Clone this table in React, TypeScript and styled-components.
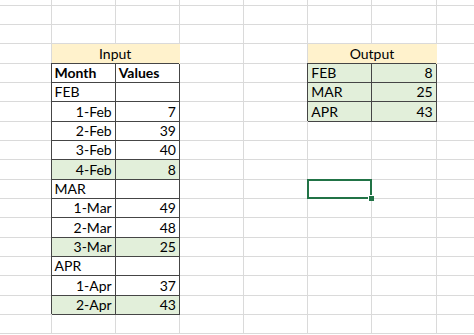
import React from "react";
import styled, { createGlobalStyle, css } from "styled-components";

const GlobalStyle = createGlobalStyle`
  html, body {
    margin: 0;
    padding: 0;
    background: #ffffff;
    overflow: hidden;
  }
`;

const COL_W = 64.2;
const ROW_H = 19.34;

const Viewport = styled.div`
  width: 474px;
  height: 335px;
  overflow: hidden;
`;

const Sheet = styled.div`
  display: grid;
  grid-template-columns: repeat(8, ${COL_W}px);
  grid-auto-rows: ${ROW_H}px;
  margin: -13.5px 0 0 -12.7px;
  font-family: Lato, "Liberation Sans", sans-serif;
  font-size: 14px;
  color: #000;
`;

type Fill = "none" | "gold" | "green";

const fills: Record<Fill, string> = {
  none: "transparent",
  gold: "#fff2cc",
  green: "#e2efda",
};

interface CellProps {
  $fill: Fill;
  $boxed?: boolean;
  $align: "left" | "right" | "center";
  $bold?: boolean;
  $span: number;
  $selected?: boolean;
}

const Cell = styled.div<CellProps>`
  position: relative;
  box-sizing: border-box;
  grid-column: span ${(p) => p.$span};
  display: flex;
  align-items: flex-end;
  justify-content: ${(p) =>
    p.$align === "right" ? "flex-end" : p.$align === "center" ? "center" : "flex-start"};
  padding: 0 3px 1px;
  background: ${(p) => fills[p.$fill]};
  border-right: 1px solid ${(p) => (p.$fill === "none" ? "#dadada" : fills[p.$fill])};
  border-bottom: 1px solid ${(p) => (p.$fill === "none" ? "#dadada" : fills[p.$fill])};
  font-weight: ${(p) => (p.$bold ? 700 : 400)};
  white-space: nowrap;
  line-height: 17px;

  ${(p) =>
    p.$boxed &&
    css`
      border-right-color: #454545;
      border-bottom-color: #454545;
      box-shadow: -1px -1px 0 0 #454545;
    `}

  ${(p) =>
    p.$selected &&
    css`
      &::after {
        content: "";
        position: absolute;
        left: -1px;
        top: -1px;
        right: -1px;
        bottom: -1px;
        border: 2px solid #217346;
      }
      &::before {
        content: "";
        position: absolute;
        right: -3px;
        bottom: -3px;
        width: 5px;
        height: 5px;
        background: #217346;
        border: 1px solid #fff;
        border-width: 1px 0 0 1px;
        z-index: 1;
      }
    `}
`;

type Spec = {
  text?: string;
  fill?: Fill;
  boxed?: boolean;
  align?: "left" | "right" | "center";
  bold?: boolean;
  span?: number;
  selected?: boolean;
};

const blank: Spec = {};

const label = (text: string, fill: Fill = "none"): Spec => ({ text, boxed: true, fill });
const num = (text: string, fill: Fill = "none"): Spec => ({ text, boxed: true, fill, align: "right" });
const empty = (): Spec => ({ boxed: true });
const header = (text: string): Spec => ({ text, fill: "gold", align: "center", span: 2 });

const rows: Spec[][] = [
  [blank, blank, blank, blank, blank, blank, blank, blank],
  [blank, blank, blank, blank, blank, blank, blank, blank],
  [blank, blank, blank, blank, blank, blank, blank, blank],
  [blank, header("Input"), blank, blank, header("Output"), blank],
  [
    blank,
    { text: "Month", boxed: true, bold: true },
    { text: "Values", boxed: true, bold: true },
    blank,
    blank,
    label("FEB", "green"),
    num("8", "green"),
    blank,
  ],
  [blank, label("FEB"), empty(), blank, blank, label("MAR", "green"), num("25", "green"), blank],
  [blank, num("1-Feb"), num("7"), blank, blank, label("APR", "green"), num("43", "green"), blank],
  [blank, num("2-Feb"), num("39"), blank, blank, blank, blank, blank],
  [blank, num("3-Feb"), num("40"), blank, blank, blank, blank, blank],
  [blank, num("4-Feb", "green"), num("8", "green"), blank, blank, blank, blank, blank],
  [blank, label("MAR"), empty(), blank, blank, { selected: true }, blank, blank],
  [blank, num("1-Mar"), num("49"), blank, blank, blank, blank, blank],
  [blank, num("2-Mar"), num("48"), blank, blank, blank, blank, blank],
  [blank, num("3-Mar", "green"), num("25", "green"), blank, blank, blank, blank, blank],
  [blank, label("APR"), empty(), blank, blank, blank, blank, blank],
  [blank, num("1-Apr"), num("37"), blank, blank, blank, blank, blank],
  [blank, num("2-Apr", "green"), num("43", "green"), blank, blank, blank, blank, blank],
  [blank, blank, blank, blank, blank, blank, blank, blank],
];

export default function App() {
  return (
    <Viewport>
      <GlobalStyle />
      <Sheet>
        {rows.map((row, r) =>
          row.map((c, i) => (
            <Cell
              key={`${r}-${i}`}
              $fill={c.fill ?? "none"}
              $boxed={c.boxed}
              $align={c.align ?? "left"}
              $bold={c.bold}
              $span={c.span ?? 1}
              $selected={c.selected}
            >
              {c.text}
            </Cell>
          ))
        )}
      </Sheet>
    </Viewport>
  );
}
